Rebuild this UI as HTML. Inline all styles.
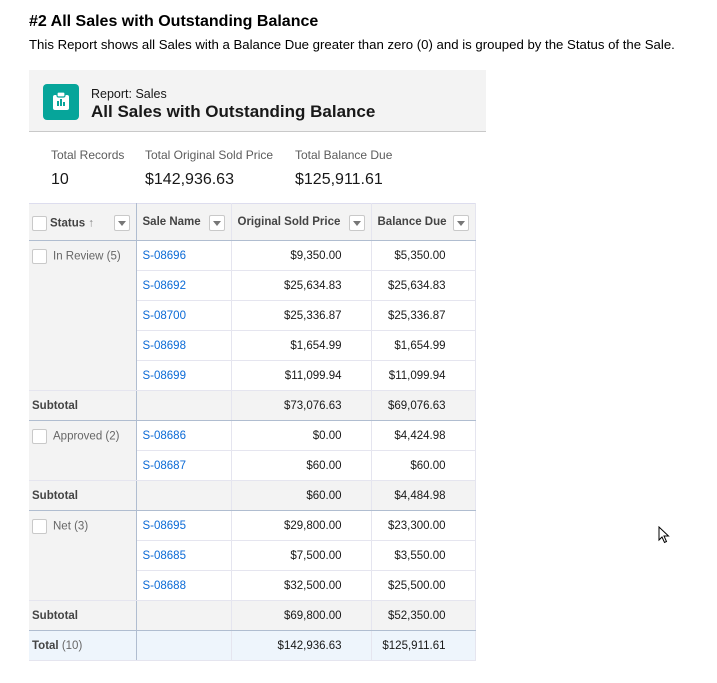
<!DOCTYPE html>
<html><head><meta charset="utf-8"><style>
body{margin:0;width:717px;height:683px;background:#fff;font-family:"Liberation Sans",sans-serif;position:relative;overflow:hidden;color:#181818}
.a{position:absolute;white-space:nowrap}
h1{position:absolute;left:29px;top:13px;margin:0;font-size:16px;font-weight:bold;color:#000}
.sub{left:29px;top:37px;font-size:13.2px;color:#000}
.ban{left:29px;top:70px;width:457px;height:61px;background:#f3f3f3;border-bottom:1px solid #c9c9c9}
.ic{left:43px;top:84px;width:36px;height:36px;background:#06a59a;border-radius:4px}
.lbl{font-size:12px;color:#5c5c5c}
.val{font-size:16px;color:#181818}
table{position:absolute;left:29px;top:203px;border-collapse:collapse;table-layout:fixed;font-size:11.5px}
td,th{height:29px;padding:0 6px;border:1px solid #e5e5ef;border-left:none;border-right:1px solid #e5e5ef;white-space:nowrap}
th{height:33px;text-align:left;font-weight:bold;color:#444;background:#f3f3f3;border-bottom:1px solid #b0bdd0;border-top:1px solid #dde;vertical-align:middle;padding-top:3px}
td.c1{border-right:1px solid #b0bdd0;background:#f3f3f3;color:#666;vertical-align:top;padding-top:8px}
td.c2{color:#0b6ad6}
td.n{text-align:right;padding-right:29px}
td.n4{text-align:right;padding-right:29px}
tr.st td{background:#f3f3f3;font-weight:normal;border-bottom:1px solid #b0bdd0}
tr.st td.c1{font-weight:bold;color:#444;vertical-align:middle;padding-top:0}
tr.tot td{background:#eef5fc}
tr.tot td.c1{background:#eef5fc;vertical-align:middle;padding-top:0}
.cb{display:inline-block;width:13px;height:13px;border:1px solid #c9c9c9;background:#fff;border-radius:2px;vertical-align:middle;margin-right:6px}
.dd{float:right;width:14px;height:14px;border:1px solid #c9c9c9;border-radius:2px;background:#fff;position:relative;top:-1px}
.dd:after{content:"";position:absolute;left:3px;top:5px;border-left:4px solid transparent;border-right:4px solid transparent;border-top:5px solid #777}
</style></head><body>
<h1>#2 All Sales with Outstanding Balance</h1>
<div class="a sub">This Report shows all Sales with a Balance Due greater than zero (0) and is grouped by the Status of the Sale.</div>
<div class="a ban"></div>
<div class="a ic"><svg width="36" height="36" viewBox="0 0 36 36"><rect x="10" y="11" width="16" height="15" rx="2" fill="#fff"/><rect x="14" y="8" width="8" height="5" rx="1.5" fill="#fff" stroke="#06a59a" stroke-width="1.2"/><rect x="14" y="17" width="2" height="5" fill="#06a59a"/><rect x="17" y="15" width="2" height="7" fill="#06a59a"/><rect x="20" y="18" width="2" height="4" fill="#06a59a"/></svg></div>
<div class="a" style="left:91px;top:87px;font-size:12.5px;color:#181818">Report: Sales</div>
<div class="a" style="left:91px;top:102px;font-size:17px;font-weight:bold;color:#181818">All Sales with Outstanding Balance</div>
<div class="a lbl" style="left:51px;top:148px">Total Records</div>
<div class="a lbl" style="left:145px;top:148px">Total Original Sold Price</div>
<div class="a lbl" style="left:295px;top:148px">Total Balance Due</div>
<div class="a val" style="left:51px;top:171px">10</div>
<div class="a val" style="left:145px;top:171px">$142,936.63</div>
<div class="a val" style="left:295px;top:171px">$125,911.61</div>
<table>
<colgroup><col style="width:107px"><col style="width:95px"><col style="width:140px"><col style="width:104px"></colgroup>
<tr><th style="padding-left:3px;border-right:1px solid #b0bdd0"><span class="cb" style="margin-right:3px"></span>Status <span style="color:#888;font-weight:normal">↑</span><span class="dd"></span></th><th>Sale Name<span class="dd"></span></th><th>Original Sold Price<span class="dd"></span></th><th>Balance Due<span class="dd"></span></th></tr>
<tr><td class="c1" rowspan="5" style="padding-left:3px"><span class="cb"></span>In Review (5)</td><td class="c2">S-08696</td><td class="n">$9,350.00</td><td class="n4">$5,350.00</td></tr>
<tr><td class="c2">S-08692</td><td class="n">$25,634.83</td><td class="n4">$25,634.83</td></tr>
<tr><td class="c2">S-08700</td><td class="n">$25,336.87</td><td class="n4">$25,336.87</td></tr>
<tr><td class="c2">S-08698</td><td class="n">$1,654.99</td><td class="n4">$1,654.99</td></tr>
<tr><td class="c2">S-08699</td><td class="n">$11,099.94</td><td class="n4">$11,099.94</td></tr>
<tr class="st"><td class="c1" style="padding-left:3px">Subtotal</td><td></td><td class="n">$73,076.63</td><td class="n4">$69,076.63</td></tr>
<tr><td class="c1" rowspan="2" style="padding-left:3px"><span class="cb"></span>Approved (2)</td><td class="c2">S-08686</td><td class="n">$0.00</td><td class="n4">$4,424.98</td></tr>
<tr><td class="c2">S-08687</td><td class="n">$60.00</td><td class="n4">$60.00</td></tr>
<tr class="st"><td class="c1" style="padding-left:3px">Subtotal</td><td></td><td class="n">$60.00</td><td class="n4">$4,484.98</td></tr>
<tr><td class="c1" rowspan="3" style="padding-left:3px"><span class="cb"></span>Net (3)</td><td class="c2">S-08695</td><td class="n">$29,800.00</td><td class="n4">$23,300.00</td></tr>
<tr><td class="c2">S-08685</td><td class="n">$7,500.00</td><td class="n4">$3,550.00</td></tr>
<tr><td class="c2">S-08688</td><td class="n">$32,500.00</td><td class="n4">$25,500.00</td></tr>
<tr class="st"><td class="c1" style="padding-left:3px">Subtotal</td><td></td><td class="n">$69,800.00</td><td class="n4">$52,350.00</td></tr>
<tr class="tot"><td class="c1" style="padding-left:3px;color:#666"><b style="color:#444">Total</b> (10)</td><td></td><td class="n">$142,936.63</td><td class="n4">$125,911.61</td></tr>
</table>
<svg class="a" style="left:658px;top:526px" width="12" height="18" viewBox="0 0 12 18"><path d="M1 1 L1 14 L4 11 L6.5 16.5 L8.5 15.5 L6 10 L10.5 10 Z" fill="#fff" stroke="#000" stroke-width="1"/></svg>
</body></html>
